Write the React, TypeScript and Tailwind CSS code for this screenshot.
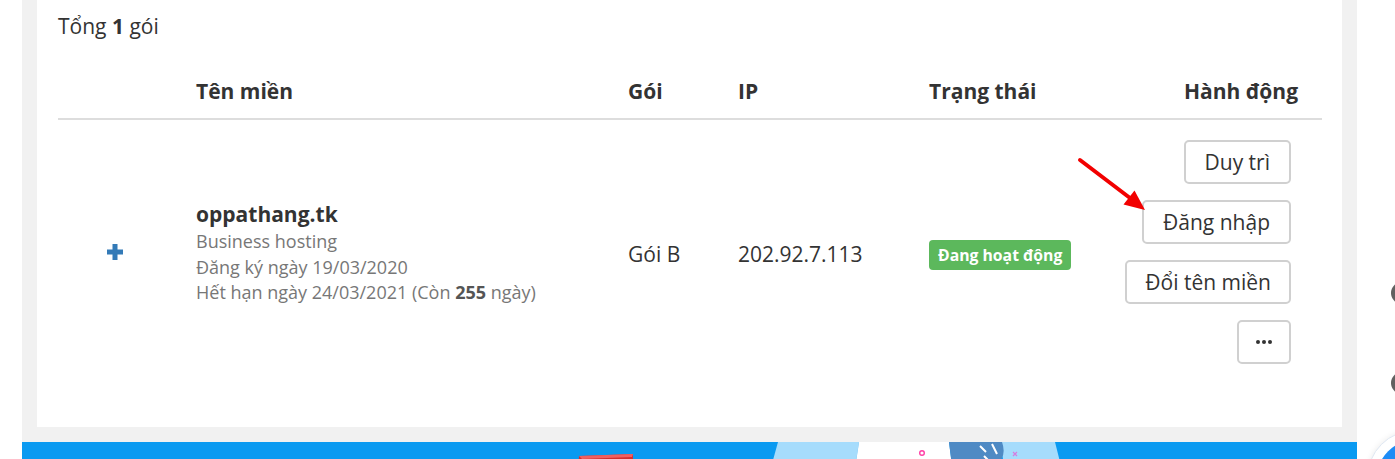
import React from "react";

const Btn = ({ children, className = "" }: { children: React.ReactNode; className?: string }) => (
  <div
    className={
      "h-[44px] flex items-center justify-center border-2 border-[#d0d0d0] rounded-[5px] bg-white text-[21px] leading-[30px] text-[#333] " +
      className
    }
  >
    {children}
  </div>
);

export default function App() {
  return (
    <div className="relative w-[1395px] h-[459px] overflow-hidden bg-white font-['Open_Sans',sans-serif]">
      <div className="ml-[22px] w-[1335px] bg-[#f1f1f1] px-[15px] pb-[15px]">
        <div className="bg-white h-[427px] pl-[21px] pr-[20px] pt-[11px]">
          <p className="text-[21px] leading-[30px] text-[#333]">
            Tổng <b>1</b> gói
          </p>
          <div className="mt-[35px] grid grid-cols-[114px_456px_110px_191px_190px_1fr] border-b-2 border-[#dddddd] pb-[12px] text-[21px] leading-[30px] font-bold text-[#333]">
            <div></div>
            <div className="pl-[24px]">Tên miền</div>
            <div>Gói</div>
            <div>IP</div>
            <div>Trạng thái</div>
            <div className="text-right pr-[24px]">Hành động</div>
          </div>
          <div className="grid grid-cols-[114px_456px_110px_191px_190px_1fr] items-center pt-[20px] text-[21px] leading-[30px] text-[#333]">
            <div className="flex justify-center">
              <svg width="16" height="16" viewBox="0 0 16 16">
                <rect x="5.5" y="0" width="5" height="16" fill="#337ab7" />
                <rect x="0" y="5.5" width="16" height="5" fill="#337ab7" />
              </svg>
            </div>
            <div className="pl-[24px] pt-[2px]">
              <div className="font-bold text-[21px] leading-[29px] text-[#333]">oppathang.tk</div>
              <div className="text-[18px] leading-[25.7px] text-[#777]">
                <div>Business hosting</div>
                <div>Đăng ký ngày 19/03/2020</div>
                <div>
                  Hết hạn ngày 24/03/2021 (Còn <b className="text-[#555]">255</b> ngày)
                </div>
              </div>
            </div>
            <div className="pt-[4px]">Gói B</div>
            <div className="pt-[4px]">202.92.7.113</div>
            <div className="pt-[4px]">
              <span className="inline-flex h-[30px] items-center rounded-[4px] bg-[#5cb85c] px-[9px] text-[15.75px] font-bold leading-none text-white">
                Đang hoạt động
              </span>
            </div>
            <div className="flex flex-col items-end gap-[16px] pr-[31px]">
              <Btn className="px-[19px]">Duy trì</Btn>
              <Btn className="px-[19px]">Đăng nhập</Btn>
              <Btn className="px-[18px]">Đổi tên miền</Btn>
              <Btn className="w-[54px]">
                <svg width="16" height="4" viewBox="0 0 16 4">
                  <circle cx="2" cy="2" r="2" fill="#333" />
                  <circle cx="8" cy="2" r="2" fill="#333" />
                  <circle cx="14" cy="2" r="2" fill="#333" />
                </svg>
              </Btn>
            </div>
          </div>
        </div>
      </div>
      <div className="ml-[22px] w-[1335px] h-[40px] bg-[#0a9af1] overflow-hidden">
        <svg width="1335" height="40" viewBox="0 0 1335 40">
          <polygon points="756,0 837,0 831,40 745,40" fill="#a6dcfc" />
          <polygon points="837,0 927,0 932,40 831,40" fill="#ffffff" />
          <polygon points="978,0 1033,0 1043,40 985,40" fill="#a6dcfc" />
          <path d="M927,0 L980,0 Q985,14 975,22 L960,30 Q940,36 932,40 Z" fill="#4f8ac4" />
          <path d="M958,4 L964,10 M962,14 L968,20 M970,2 L975,12" stroke="#ffffff" strokeWidth="2" fill="none" />
          <circle cx="900" cy="11" r="2.3" fill="none" stroke="#ff3ea5" strokeWidth="1.4" />
          <path d="M991,10 L995,14 M995,10 L991,14" stroke="#d77be0" strokeWidth="1.2" />
          <polygon points="557,14 611,12 611,40 555,40" fill="#d32f2f" />
          <polygon points="557,14 611,12 610,15 560,17" fill="#f06060" />
        </svg>
      </div>

      {/* red annotation arrow */}
      <svg className="absolute left-0 top-0 pointer-events-none" width="1395" height="459">
        <line x1="1080" y1="160" x2="1130" y2="198" stroke="#f20000" strokeWidth="4" strokeLinecap="round" />
        <polygon points="1145,210 1123.5,204.5 1134.5,190.5" fill="#f20000" />
      </svg>

      {/* floating side buttons */}
      <div className="absolute left-[1391px] top-[282px] h-[22px] w-[22px] rounded-full bg-[#616161]" />
      <div className="absolute left-[1391px] top-[372px] h-[22px] w-[22px] rounded-full bg-[#616161]" />
      <div className="absolute left-[1367px] top-[430px] h-[96px] w-[96px] rounded-full border border-[#dfe8f3] bg-white shadow-[0_0_6px_rgba(0,0,0,0.08)]" />
      <div className="absolute left-[1377px] top-[440px] h-[76px] w-[76px] rounded-full bg-[#1e8cf5]" />
    </div>
  );
}
